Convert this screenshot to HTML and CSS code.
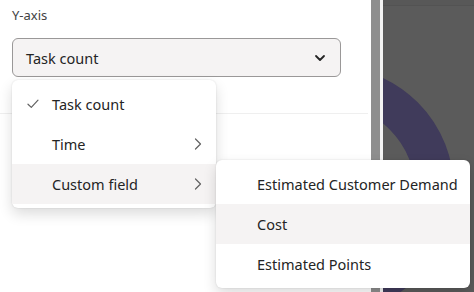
FILE: index.html
```html
<!DOCTYPE html>
<html lang="en">
<head>
    <meta charset="UTF-8">
    <meta name="viewport" content="width=device-width, initial-scale=1.0">
    <title>Chart settings</title>
    <link rel="stylesheet" href="styles.css">
</head>
<body>
    <div class="app">
        <div class="panel">
            <div class="field-label">Y-axis</div>
            <div class="dropdown">
                <span>Task count</span>
                <svg class="chevron-down" width="12" height="8" viewBox="0 0 12 8">
                    <path d="M2 2 L6 6 L10 2" fill="none" stroke="#242424" stroke-width="1.8" stroke-linecap="round" stroke-linejoin="round"/>
                </svg>
            </div>
            <div class="divider"></div>
        </div>
        <div class="splitter"></div>
        <div class="gutter"></div>
        <div class="canvas">
            <div class="canvas-top"></div>
            <div class="ring"></div>
        </div>

        <ul class="menu menu-main">
            <li class="menu-item">
                <svg class="check" width="12" height="10" viewBox="0 0 12 10">
                    <path d="M1 5.2 L4.3 8.4 L11 1.2" fill="none" stroke="#616161" stroke-width="1.2" stroke-linecap="round" stroke-linejoin="round"/>
                </svg>
                <span>Task count</span>
            </li>
            <li class="menu-item">
                <span>Time</span>
                <svg class="chevron-right" width="8" height="12" viewBox="0 0 8 12">
                    <path d="M1.5 1 L6.5 6 L1.5 11" fill="none" stroke="#616161" stroke-width="1.2" stroke-linecap="round" stroke-linejoin="round"/>
                </svg>
            </li>
            <li class="menu-item active">
                <span>Custom field</span>
                <svg class="chevron-right" width="8" height="12" viewBox="0 0 8 12">
                    <path d="M1.5 1 L6.5 6 L1.5 11" fill="none" stroke="#616161" stroke-width="1.2" stroke-linecap="round" stroke-linejoin="round"/>
                </svg>
            </li>
        </ul>

        <ul class="menu menu-sub">
            <li class="menu-item">Estimated Customer Demand</li>
            <li class="menu-item active">Cost</li>
            <li class="menu-item">Estimated Points</li>
        </ul>
    </div>
</body>
</html>
```

FILE: styles.css
```css
* {
    box-sizing: border-box;
}
body {
    margin: 0;
    font-family: "Noto Sans", "Open Sans", sans-serif;
    color: #242424;
    background: #fff;
}
.app {
    position: relative;
    display: flex;
    width: 474px;
    height: 292px;
    overflow: hidden;
}
.panel {
    width: 371px;
    background: #fff;
}
.field-label {
    padding: 6px 12px 0;
    font-size: 13px;
    line-height: 18px;
    color: #424242;
}
.dropdown {
    display: flex;
    align-items: center;
    justify-content: space-between;
    margin: 14px 0 0 12px;
    width: 329px;
    height: 39px;
    padding: 0 14px 0 13px;
    background: #f5f3f3;
    border: 1px solid #9a9898;
    border-radius: 6px;
    font-size: 14.5px;
}
.divider {
    margin-top: 36px;
    width: 368px;
    height: 1px;
    background: #efefef;
}
.splitter {
    width: 9px;
    background: #8e8e8e;
}
.gutter {
    width: 3px;
    background: #f4f4f4;
}
.canvas {
    position: relative;
    flex: 1;
    background: #5b5b5b;
    overflow: hidden;
}
.canvas-top {
    height: 6px;
    background: #585858;
    border-bottom: 1px solid #535353;
}
.ring {
    position: absolute;
    left: -177px;
    top: 66px;
    width: 248px;
    height: 248px;
    border: 39px solid #403b5b;
    border-radius: 50%;
}
.menu {
    position: absolute;
    margin: 0;
    padding: 4px 0;
    list-style: none;
    background: #fff;
    border-radius: 6px;
    box-shadow: 0 0 2px rgba(0,0,0,0.12), 0 6px 14px rgba(0,0,0,0.14);
    font-size: 14.5px;
}
.menu-main {
    left: 12px;
    top: 80px;
    width: 204px;
}
.menu-sub {
    left: 216px;
    top: 160px;
    width: 254px;
}
.menu-item {
    position: relative;
    display: flex;
    align-items: center;
    height: 40px;
    padding-left: 40px;
}
.menu-sub .menu-item {
    padding-left: 41px;
}
.menu-item.active {
    background: #f5f3f3;
}
.check {
    position: absolute;
    left: 15px;
    top: 15px;
}
.chevron-right {
    position: absolute;
    right: 14px;
    top: 14px;
}
```
